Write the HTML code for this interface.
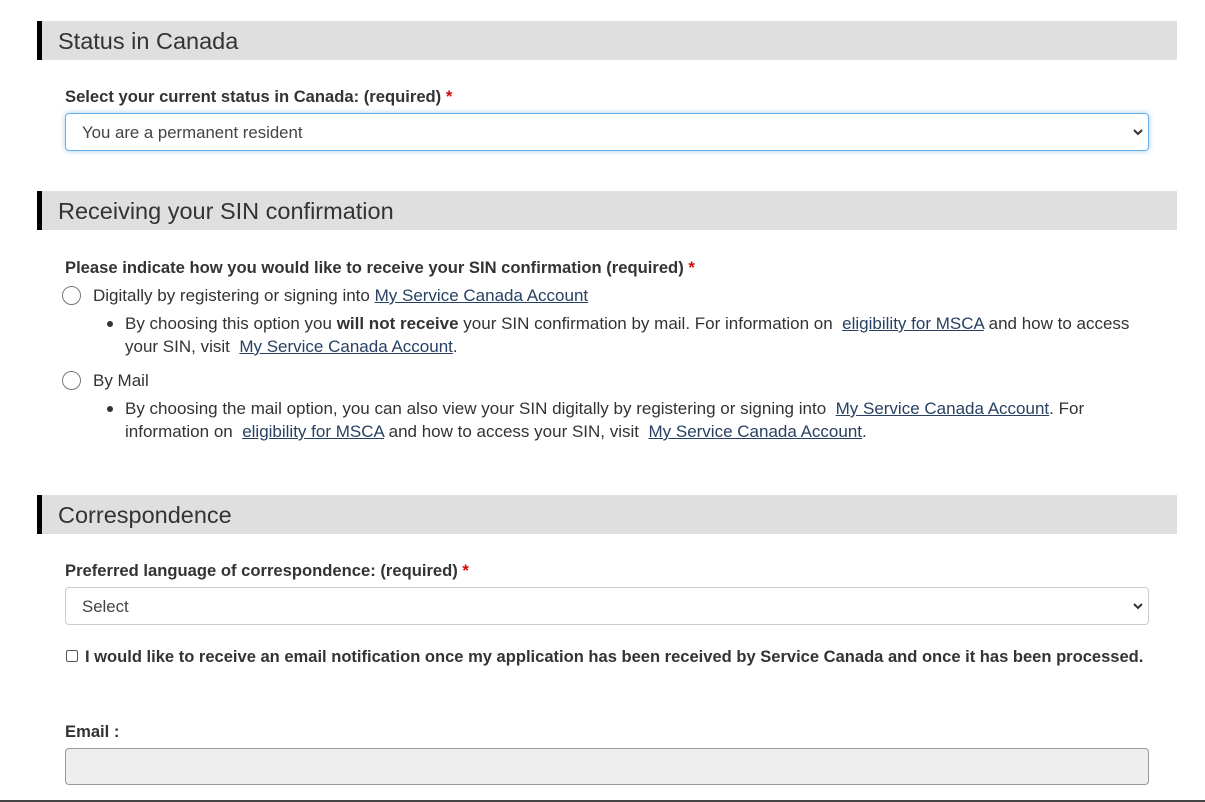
<!DOCTYPE html>
<html><head><meta charset="utf-8"><style>
*{box-sizing:border-box;margin:0;padding:0}
body{width:1205px;height:802px;background:#fff;position:relative;overflow:hidden;font-family:"Liberation Sans",sans-serif;color:#333;font-size:17px}
.h{position:absolute;left:37px;width:1140px;height:39px;background:#dfdfdf;border-left:5px solid #000;font-size:23.5px;line-height:41px;padding-left:16px;color:#333}
.lbl{position:absolute;left:65px;font-weight:bold;font-size:16.6px;color:#333;white-space:nowrap}
.lbl b{color:#d3080c}
.sel{position:absolute;left:65px;width:1084px;height:38px;border:1px solid #ccc;border-radius:4px;padding-left:16px;line-height:38px;font-size:16.8px;color:#444}
.sel svg{position:absolute;right:5px;top:14px}
.t{position:absolute;font-size:17px;white-space:nowrap;color:#333}
a{color:#284162;text-decoration:underline}
.r{position:absolute;left:62px;width:19px;height:19px;border:1.5px solid #777;border-radius:50%}
.dot{position:absolute;left:107px;width:6px;height:6px;background:#333;border-radius:50%}
</style></head><body>
<div class="h" style="top:21px">Status in Canada</div>
<div class="lbl" style="top:87px">Select your current status in Canada: (required) <b>*</b></div>
<div class="sel" style="top:113px;border-color:#66afe9;box-shadow:0 0 6px rgba(102,175,233,.6)">You are a permanent resident<svg width="10" height="8" viewBox="0 0 10 8"><path d="M1 2l4 4 4-4" stroke="#333" stroke-width="2" fill="none"/></svg></div>

<div class="h" style="top:191px">Receiving your SIN confirmation</div>
<div class="lbl" style="top:258px">Please indicate how you would like to receive your SIN confirmation (required) <b>*</b></div>
<div class="r" style="top:286px"></div>
<div class="t" style="left:93px;top:286px">Digitally by registering or signing into <a>My Service Canada Account</a></div>
<div class="dot" style="top:321px"></div>
<div class="t" style="left:125px;top:314px">By choosing this option you <b>will not receive</b> your SIN confirmation by mail. For information on &nbsp;<a>eligibility for MSCA</a> and how to access</div>
<div class="t" style="left:125px;top:337px">your SIN, visit &nbsp;<a>My Service Canada Account</a>.</div>
<div class="r" style="top:371px"></div>
<div class="t" style="left:93px;top:371px">By Mail</div>
<div class="dot" style="top:406px"></div>
<div class="t" style="left:125px;top:399px">By choosing the mail option, you can also view your SIN digitally by registering or signing into &nbsp;<a>My Service Canada Account</a>. For</div>
<div class="t" style="left:125px;top:422px">information on &nbsp;<a>eligibility for MSCA</a> and how to access your SIN, visit &nbsp;<a>My Service Canada Account</a>.</div>

<div class="h" style="top:495px">Correspondence</div>
<div class="lbl" style="top:561px">Preferred language of correspondence: (required) <b>*</b></div>
<div class="sel" style="top:587px">Select<svg width="10" height="8" viewBox="0 0 10 8"><path d="M1 2l4 4 4-4" stroke="#333" stroke-width="2" fill="none"/></svg></div>
<div style="position:absolute;left:66px;top:650px;width:12px;height:12px;border:1px solid #555;border-radius:2px"></div>
<div class="lbl" style="left:85px;top:647px;font-size:16.55px">I would like to receive an email notification once my application has been received by Service Canada and once it has been processed.</div>
<div class="lbl" style="top:722px">Email :</div>
<div style="position:absolute;left:65px;top:748px;width:1084px;height:37px;background:#eee;border:1px solid #999;border-radius:4px"></div>
<div style="position:absolute;left:0;top:800px;width:1205px;height:2px;background:#444"></div>
</body></html>
